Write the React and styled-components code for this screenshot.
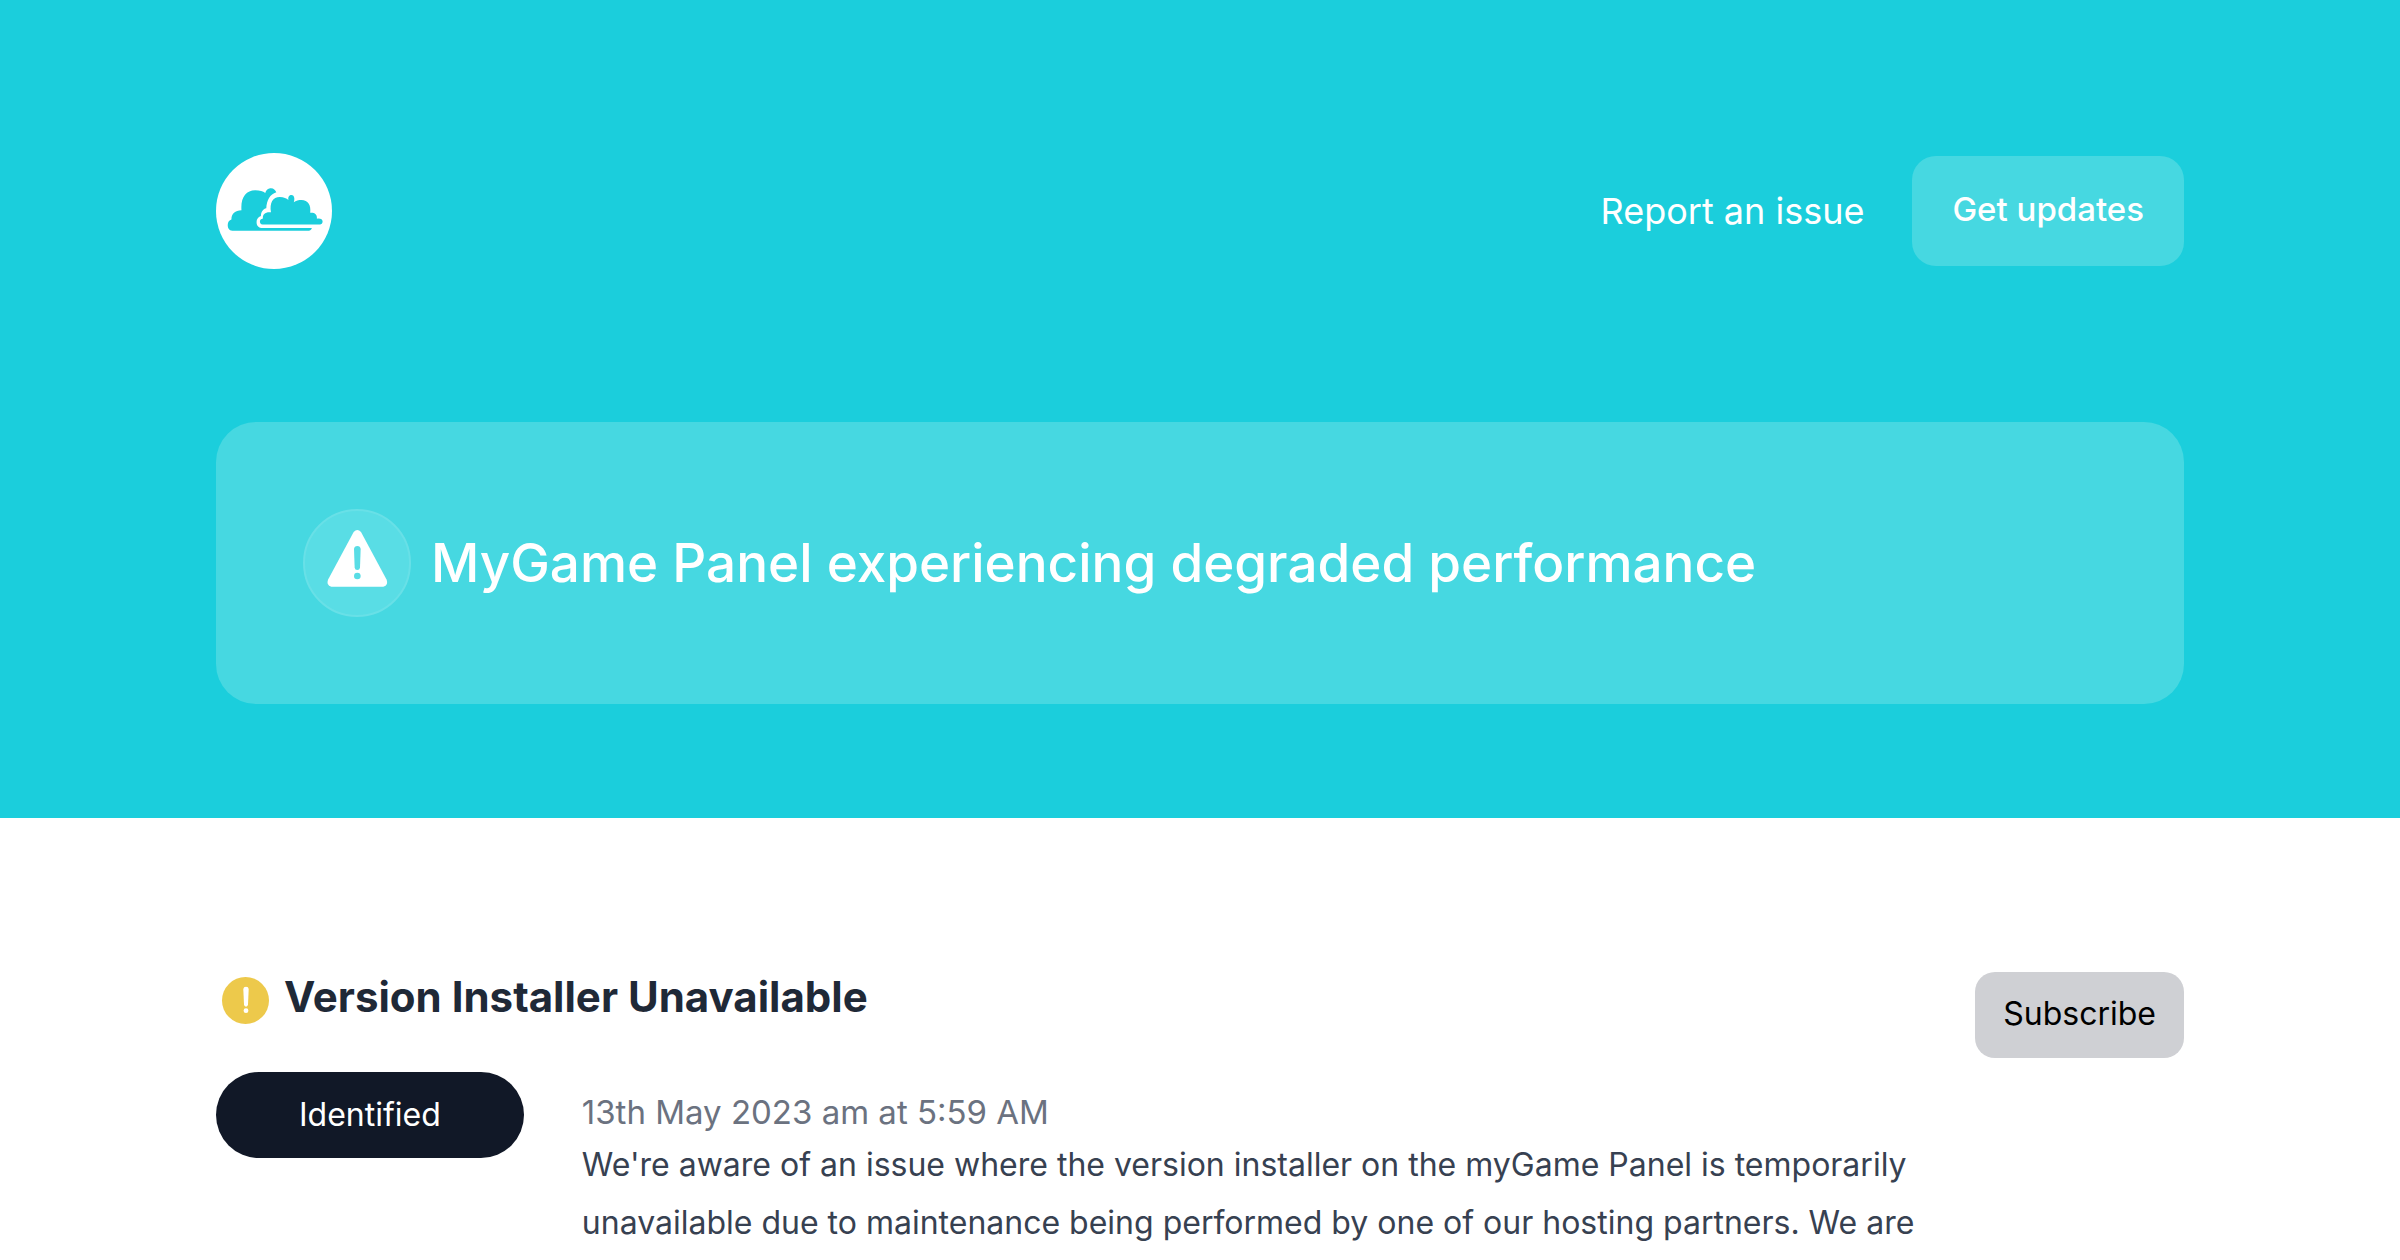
import React from "react";
import styled, { createGlobalStyle } from "styled-components";

const GlobalStyle = createGlobalStyle`
  *, *::before, *::after {
    box-sizing: border-box;
  }
  body {
    margin: 0;
    background: #fff;
    font-family: Inter, "Liberation Sans", sans-serif;
  }
  h1, h2, p {
    margin: 0;
  }
`;
const Banner = styled.header`
  background-color: #1bcedc;
  color: white;
  padding: 153px 9% 114px;
`;
const Nav = styled.nav`
  display: flex;
  align-items: center;
  justify-content: space-between;
`;
const NavLinks = styled.div`
  display: flex;
  align-items: center;
  gap: 48px;
`;
const LogoLink = styled.a`
  display: flex;
  svg {
    width: 116px;
    height: 116px;
  }
`;
const NavLink = styled.a`
  color: white;
  font-size: 36px;
  line-height: 56px;
  text-decoration: none;
`;
const Button = styled.button`
  border: 0;
  color: inherit;
  font-family: inherit;
  cursor: pointer;
`;
const UpdatesButton = styled(Button)`
  height: 110px;
  padding: 0 40px 4px;
  border-radius: 24px;
  background-color: #46d8e1;
  font-size: 33px;
  font-weight: 500;
`;
const SubscribeButton = styled(Button)`
  height: 86px;
  padding: 0 28px 4px;
  border-radius: 20px;
  background-color: #cfd0d4;
  color: black;
  font-size: 32px;
`;
const StatusCard = styled.section`
  display: flex;
  align-items: center;
  gap: 20px;
  margin-top: 153px;
  padding: 87px;
  border-radius: 40px;
  background-color: #46d8e1;
  svg {
    width: 108px;
    height: 108px;
    flex: none;
  }
`;
const StatusTitle = styled.h1`
  font-size: 53px;
  font-weight: 500;
  line-height: 72px;
`;
const Incident = styled.main`
  padding: 154px 9% 0;
`;
const IncidentHeader = styled.div`
  display: flex;
  align-items: flex-start;
  justify-content: space-between;
`;
const IncidentName = styled.div`
  display: flex;
  align-items: flex-start;
  gap: 12px;
  svg {
    width: 56px;
    height: 56px;
    flex: none;
  }
`;
const IncidentTitle = styled.h2`
  color: #1f2937;
  font-size: 42px;
  font-weight: 700;
  line-height: 50px;
`;
const Update = styled.article`
  display: flex;
  align-items: flex-start;
  gap: 58px;
  margin-top: 14px;
`;
const Badge = styled.span`
  flex: none;
  padding: 14px 83px;
  border-radius: 44px;
  background-color: #111827;
  color: white;
  font-size: 32px;
  line-height: 58px;
`;
const UpdateBody = styled.div`
  max-width: 1340px;
  padding-top: 16px;
  color: #374151;
  font-size: 32px;
  line-height: 58px;
`;
const UpdateDate = styled.time`
  display: block;
  color: #6b7280;
  font-size: 33px;
  line-height: 48px;
`;

const CloudLogo = () => (
  <svg viewBox="48 40 346 346" aria-hidden="true">
    <circle cx="221" cy="213" r="173" fill="#fff" />
    <path
      fill="#1bcedc"
      d="M97 272C86 272 83 263 83 255C83 245 88 240 94 238C94 222 105 211 124 211C121 173 137 151 165 151C179 151 188 154 195 159C198 148 206 145 212 145C220 145 225 150 228 157C209 163 199 181 198 205C188 207 182 217 182 228C173 231 169 238 169 246C169 258 176 264 187 264L334 264C332 270 329 272 325 272Z"
    />
    <path
      fill="#1bcedc"
      d="M187 253C181 253 179 248 179 244C179 239 182 236 188 235C186 223 196 215 212 217C207 188 218 171 238 171C251 171 258 175 264 180C262 170 267 165 273 165C281 165 284 175 280 187C286 181 295 180 303 180C322 180 332 195 329 218C342 217 350 222 349 236C359 234 366 238 366 244C366 250 362 253 358 253Z"
    />
  </svg>
);

const WarningIcon = () => (
  <svg viewBox="38 57 324 324" aria-hidden="true">
    <circle cx="200" cy="219" r="159" fill="#59dde5" stroke="#68e0e7" strokeWidth="6" />
    <path
      fill="#fff"
      d="M190 126Q201 114 212 126L289 269Q295 286 279 290L123 290Q107 286 113 269Z"
    />
    <path
      fill="#59dde5"
      d="M191 177Q192 168 201 168Q210 168 211 177L209 233Q208 240 201 240Q194 240 193 233Z"
    />
    <circle cx="201" cy="258" r="10" fill="#59dde5" />
  </svg>
);

const AlertIcon = () => (
  <svg viewBox="0 0 56 56" aria-hidden="true">
    <circle cx="29.5" cy="28.5" r="23.5" fill="#edc94b" />
    <path
      fill="#fff"
      d="M27.3 17Q27.5 14.7 30 14.7Q32.5 14.7 32.7 17L32 32.6Q31.8 34.7 30 34.7Q28.2 34.7 28 32.6Z"
    />
    <circle cx="30" cy="38.7" r="2.4" fill="#fff" />
  </svg>
);

const App = () => {
  return (
    <>
      <GlobalStyle />
      <Banner>
        <Nav>
          <LogoLink href="#" aria-label="Home">
            <CloudLogo />
          </LogoLink>
          <NavLinks>
            <NavLink href="#report">Report an issue</NavLink>
            <UpdatesButton type="button">Get updates</UpdatesButton>
          </NavLinks>
        </Nav>
        <StatusCard>
          <WarningIcon />
          <StatusTitle>MyGame Panel experiencing degraded performance</StatusTitle>
        </StatusCard>
      </Banner>
      <Incident>
        <IncidentHeader>
          <IncidentName>
            <AlertIcon />
            <IncidentTitle>Version Installer Unavailable</IncidentTitle>
          </IncidentName>
          <SubscribeButton type="button">Subscribe</SubscribeButton>
        </IncidentHeader>
        <Update>
          <Badge>Identified</Badge>
          <UpdateBody>
            <UpdateDate dateTime="2023-05-13T05:59">13th May 2023 am at 5:59 AM</UpdateDate>
            <p>
              We're aware of an issue where the version installer on the myGame Panel is temporarily
              unavailable due to maintenance being performed by one of our hosting partners. We are
            </p>
          </UpdateBody>
        </Update>
      </Incident>
    </>
  );
};

export default App;
